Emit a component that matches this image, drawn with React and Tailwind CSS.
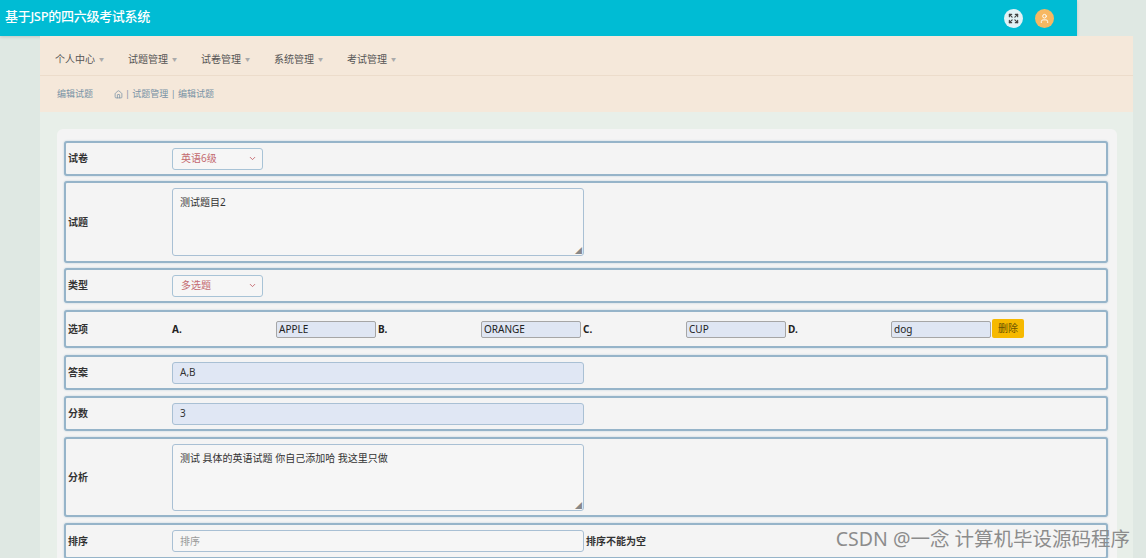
import React from 'react';
import { Expand, User, ChevronDown, Home } from 'lucide-react';

const font = { fontFamily: '"Noto Sans", "Noto Sans CJK SC", sans-serif' };

const menus = ['个人中心', '试题管理', '试卷管理', '系统管理', '考试管理'];

function Row({ label, children, className = 'h-[35px]' }) {
  return (
    <div className={`flex items-center rounded-[3px] border-2 border-[#96b4c9] bg-[#f4f4f4] shadow-[0_0_2px_#b3c9d8] ${className}`}>
      <div className="w-[106px] shrink-0 pl-[2px] text-[10px] font-bold text-[#333]">{label}</div>
      {children}
    </div>
  );
}

function Select({ value }) {
  return (
    <div className="flex h-[22px] w-[91px] items-center justify-between rounded-[3px] border border-[#a8c3d6] bg-[#f6f6f6] pl-[8px] pr-[5px] text-[10px] text-[#c46a70]">
      <span>{value}</span>
      <ChevronDown size={9} strokeWidth={2.5} className="text-[#c46a70]" />
    </div>
  );
}

function TextBox({ value, placeholder }) {
  return (
    <div className="flex h-[22px] w-[412px] items-center rounded-[3px] border border-[#a9c0d4] bg-[#e0e7f4] px-[7px] text-[10px] text-[#333]">
      {value ? value : <span className="text-[#9a9a9a]">{placeholder}</span>}
    </div>
  );
}

function Area({ value, h }) {
  return (
    <div className={`relative w-[412px] rounded-[3px] border border-[#a9c0d4] bg-[#f6f6f6] px-[7px] pt-[6px] text-[10px] text-[#333] ${h}`}>
      {value}
      <span className="absolute bottom-[1px] right-[1px] text-[7px] leading-none text-[#888]">◢</span>
    </div>
  );
}

function OptionInput({ value }) {
  return (
    <div className="flex h-[17px] w-[100px] shrink-0 items-center rounded-[2px] border border-[#a6a6a6] bg-[#dfe6f3] px-[2px] text-[10px] text-[#222]">
      {value}
    </div>
  );
}

export default function App() {
  const options = [
    { k: 'A.', v: 'APPLE', w: 'w-[104px]' },
    { k: 'B.', v: 'ORANGE', w: 'ml-[2px] w-[103px]' },
    { k: 'C.', v: 'CUP', w: 'ml-[2px] w-[103px]' },
    { k: 'D.', v: 'dog', w: 'ml-[2px] w-[103px]' },
  ];

  return (
    <div className="relative h-[558px] w-[1146px] overflow-hidden bg-[#dfe8e3]" style={font}>
      <header className="flex h-[36px] w-[1077px] items-center justify-between bg-[#00bcd4] pl-[5px] pr-[23px] shadow-[0_1px_3px_rgba(0,0,0,0.15)]">
        <span className="pb-[3px] text-[13px] font-medium tracking-[-0.3px] text-white">基于JSP的四六级考试系统</span>
        <div className="flex items-center gap-[12px]">
          <div className="flex h-[19px] w-[19px] items-center justify-center rounded-full bg-[#e2f2f6]">
            <Expand size={11} strokeWidth={2.5} className="text-[#444]" />
          </div>
          <div className="flex h-[19px] w-[19px] items-center justify-center rounded-full bg-[#f7b862]">
            <User size={11} strokeWidth={2} className="text-white" />
          </div>
        </div>
      </header>

      <div className="ml-[40px] w-[1093px]">
        <nav className="flex h-[40px] items-center border-b border-[#ecdccb] bg-[#f5e8da] pl-[15px] pt-[8px]">
          {menus.map((m) => (
            <div key={m} className="flex w-[73px] items-center gap-[4px] text-[10px] text-[#555]">
              {m}
              <span className="text-[5px] text-[#aaa]">▼</span>
            </div>
          ))}
        </nav>
        <div className="flex h-[36px] items-center bg-[#f5e8da] pl-[17px] text-[9px] text-[#7892a5]">
          <span className="w-[57px]">编辑试题</span>
          <Home size={9} strokeWidth={2} className="mr-[2px] text-[#7892a5]" />
          <span>| 试题管理 | 编辑试题</span>
        </div>

        <div className="bg-[#e8efe9] pl-[17px] pr-[16px] pt-[17px]">
          <div className="flex flex-col gap-[5px] rounded-[6px] bg-[#f4f4f4] pb-[20px] pl-[7px] pr-[9px] pt-[12px]">
            <Row label="试卷">
              <Select value="英语6级" />
            </Row>
            <Row label="试题" className="h-[82px]">
              <Area value="测试题目2" h="h-[68px]" />
            </Row>
            <Row label="类型">
              <Select value="多选题" />
            </Row>
            <Row label="选项" className="mt-[2px] h-[38px]">
              {options.map((o) => (
                <React.Fragment key={o.k}>
                  <span className={`${o.w} shrink-0 text-[10px] font-bold text-[#222]`}>{o.k}</span>
                  <OptionInput value={o.v} />
                </React.Fragment>
              ))}
              <button className="mb-[2px] ml-[1px] h-[19px] w-[32px] rounded-[2px] bg-[#f6b900] text-[10px] text-[#6b5200]">删除</button>
            </Row>
            <Row label="答案" className="mt-[2px] h-[35px]">
              <TextBox value="A,B" />
            </Row>
            <Row label="分数" className="mt-[1px] h-[35px]">
              <TextBox value="3" />
            </Row>
            <Row label="分析" className="mt-[1px] h-[80px]">
              <Area value="测试 具体的英语试题 你自己添加哈 我这里只做" h="h-[67px]" />
            </Row>
            <Row label="排序" className="mt-[1px] h-[36px]">
              <div className="flex h-[22px] w-[412px] items-center rounded-[3px] border border-[#a9c0d4] bg-[#f6f6f6] px-[7px] text-[10px] text-[#9a9a9a]">
                排序
              </div>
              <span className="ml-[2px] text-[10px] font-bold text-[#333]">排序不能为空</span>
            </Row>
          </div>
        </div>
      </div>

      <div className="absolute bottom-[5px] right-[16px] text-[19.5px] text-[#8c8c8c]">CSDN @一念 计算机毕设源码程序</div>
    </div>
  );
}
